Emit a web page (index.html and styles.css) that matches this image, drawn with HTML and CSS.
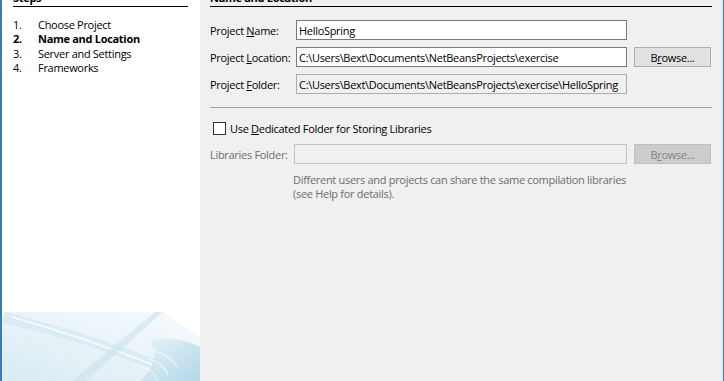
FILE: index.html
```html
<!DOCTYPE html>
<html lang="en">
<head>
    <meta charset="UTF-8">
    <meta name="viewport" content="width=device-width, initial-scale=1.0">
    <title>New Web Application</title>
    <link rel="stylesheet" href="styles.css">
</head>
<body>
    <div class="wizard">
        <!--left column: wizard steps-->
        <aside class="steps">
            <h2 class="stepsTitle">Steps</h2>
            <ol class="stepList">
                <li><span class="stepNum">1.</span>Choose Project</li>
                <li class="current"><span class="stepNum">2.</span>Name and Location</li>
                <li><span class="stepNum">3.</span>Server and Settings</li>
                <li><span class="stepNum">4.</span>Frameworks</li>
            </ol>
            <svg class="swoosh" width="198" height="72" viewBox="0 0 198 72">
                <defs>
                    <linearGradient id="baseFill" x1="0" y1="1" x2="1" y2="0">
                        <stop offset="0" stop-color="#d9ebf4"/>
                        <stop offset="1" stop-color="#f8fbfd"/>
                    </linearGradient>
                    <linearGradient id="curveFill" x1="0" y1="0" x2="1" y2="1">
                        <stop offset="0" stop-color="#e8f3f8"/>
                        <stop offset="1" stop-color="#b2d7e8"/>
                    </linearGradient>
                </defs>
                <path d="M3,3 L160,3 L198,28 L198,72 L0,72 L0,6 Z" fill="url(#baseFill)"/>
                <path d="M3,3 Q80,22 158,52 L150,60 Q75,30 0,14 Z" fill="#d3e8f2" opacity="0.7"/>
                <path d="M10,8 Q80,28 152,56" stroke="#fff" stroke-width="1.5" fill="none" opacity="0.85"/>
                <path d="M153,3 L161,3 L84,72 L70,72 Z" fill="#cbe3ef" opacity="0.6"/>
                <path d="M148,32 Q175,26 198,38 L198,72 L138,72 Q160,52 148,32 Z" fill="url(#curveFill)"/>
                <path d="M152,42 Q168,46 175,58" stroke="#fff" stroke-width="1.2" fill="none" opacity="0.7"/>
                <path d="M147,50 Q161,54 166,66" stroke="#fff" stroke-width="1.2" fill="none" opacity="0.7"/>
                <path d="M141,58 Q153,62 156,72" stroke="#fff" stroke-width="1.2" fill="none" opacity="0.6"/>
            </svg>
        </aside>

        <!--right column: name and location form-->
        <main class="panel">
            <h2 class="panelTitle">Name and Location</h2>

            <div class="fieldGrid">
                <label>Project <u>N</u>ame:</label>
                <input class="field" type="text" value="HelloSpring">
                <span></span>

                <label>Project <u>L</u>ocation:</label>
                <input class="field" type="text" value="C:\Users\Bext\Documents\NetBeansProjects\exercise">
                <button class="browseBtn">B<u>r</u>owse...</button>

                <label>Project <u>F</u>older:</label>
                <input class="field readonly" type="text" readonly value="C:\Users\Bext\Documents\NetBeansProjects\exercise\HelloSpring">
                <span></span>
            </div>

            <hr class="sep">

            <label class="check"><span class="box"></span><span>Use <u>D</u>edicated Folder for Storing Libraries</span></label>

            <div class="fieldGrid libs">
                <label class="muted">Libraries Folder:</label>
                <input class="field disabled" type="text" disabled>
                <button class="browseBtn" disabled>B<u>r</u>owse...</button>
            </div>

            <p class="hint">Different users and projects can share the same compilation libraries<br>(see Help for details).</p>
        </main>
    </div>
</body>
</html>
```

FILE: styles.css
```css
*{
    box-sizing: border-box;
}

body{
    margin: 0;
    font-family: "Open Sans", "Noto Sans", sans-serif;
    font-size: 11px;
    letter-spacing: -0.3px;
    color: #000;
    background: #f0f0f0;
}

.wizard{
    display: flex;
    height: 381px;
    overflow: hidden;
    border-left: 2px solid #3e7cae;
    border-right: 1px solid #3e7cae;
}

/* steps column */
.steps{
    width: 198px;
    flex: none;
    display: flex;
    flex-direction: column;
    padding: 0 12px 0 11px;
    background: #fff;
}

.stepsTitle, .panelTitle{
    margin: -10px 0 0;
    padding-bottom: 1px;
    font-size: 11px;
    font-weight: bold;
    line-height: 15px;
    border-bottom: 1px solid #000;
}

.stepList{
    list-style: none;
    margin: 11px 0 0;
    padding: 0;
}

.stepList li{
    display: flex;
    line-height: 14.4px;
}

.stepList li.current{
    font-weight: bold;
}

.stepNum{
    width: 25px;
    flex: none;
}

.swoosh{
    display: block;
    margin: auto -12px 0 -11px;
}

/* form column */
.panel{
    flex: 1;
    padding: 0 9px 0 10px;
    border-right: 2px solid #e2ebf2;
}

.fieldGrid{
    display: grid;
    grid-template-columns: 86px 331px 84px;
    row-gap: 7px;
    align-items: center;
    margin-top: 13px;
}

.field{
    height: 20px;
    margin: 0;
    padding: 0 2px;
    font: inherit;
    letter-spacing: inherit;
    color: #000;
    background: #fff;
    border: 1px solid #7a7a7a;
    border-radius: 0;
    outline: none;
}

.field.readonly{
    background: #f0f0f0;
    border-color: #adadad;
}

.field.disabled{
    background: #f0f0f0;
    border-color: #c3c3c3;
}

.browseBtn{
    justify-self: end;
    width: 77px;
    height: 20px;
    margin: 0;
    padding: 0;
    font: inherit;
    letter-spacing: inherit;
    color: #000;
    background: #e1e1e1;
    border: 1px solid #adadad;
    border-radius: 0;
}

.browseBtn:disabled{
    color: #838383;
    background: #cccccc;
    border-color: #bfbfbf;
}

.sep{
    margin: 13px 0 0;
    border: 0;
    border-top: 1px solid #a0a0a0;
}

.check{
    display: flex;
    align-items: center;
    gap: 4px;
    margin: 14px 0 0 3px;
    line-height: 13px;
}

.check .box{
    width: 13px;
    height: 13px;
    flex: none;
    background: #fff;
    border: 1px solid #333;
}

.fieldGrid.libs{
    grid-template-columns: 84px 333px 84px;
    margin-top: 9px;
}

.muted{
    color: #6d6d6d;
}

.hint{
    margin: 9px 0 0 83px;
    color: #6d6d6d;
    line-height: 13.5px;
}
```
